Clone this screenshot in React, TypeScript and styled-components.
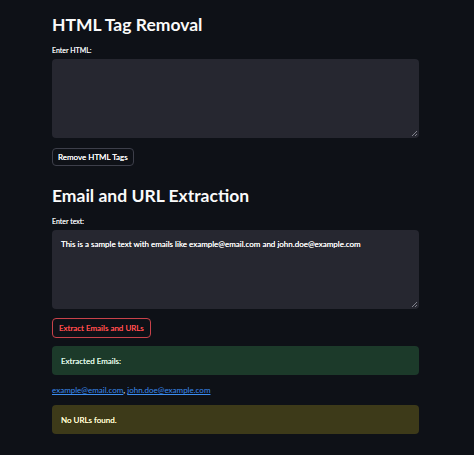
import React from 'react';
import styled, { createGlobalStyle } from 'styled-components';

const GlobalStyle = createGlobalStyle`
  html, body {
    margin: 0;
    padding: 0;
    background: #0e1117;
  }
  body {
    font-family: Lato, "Liberation Sans", sans-serif;
    color: #fafafa;
  }
`;

const Page = styled.div`
  width: 474px;
  height: 455px;
  background: #0e1117;
  overflow: hidden;
`;

const Main = styled.div`
  width: 367px;
  margin-left: 52px;
  padding-top: 12px;
  display: flex;
  flex-direction: column;
`;

const Heading = styled.h1<{ $top?: number }>`
  margin: ${(p) => p.$top ?? 0}px 0 0 0;
  font-size: 17.5px;
  font-weight: 700;
  line-height: 26px;
  color: #fafafa;
`;

const Label = styled.div`
  margin-top: 7px;
  font-size: 7px;
  font-weight: 400;
  line-height: 10px;
  color: #ececf0;
  text-shadow: 0 0 0.3px #ececf0;
`;

const TextArea = styled.div`
  position: relative;
  margin-top: 4px;
  height: 79px;
  background: #262730;
  border-radius: 4px;
  padding: 9px 9px;
  box-sizing: border-box;
  font-size: 8px;
  line-height: 11px;
  color: #fafafa;
  text-shadow: 0 0 0.3px #fafafa;
`;

const Grip = styled.svg`
  position: absolute;
  right: 1px;
  bottom: 1px;
`;

const Button = styled.button<{ $accent?: boolean }>`
  align-self: flex-start;
  margin-top: ${(p) => (p.$accent ? 9 : 10)}px;
  height: ${(p) => (p.$accent ? 20 : 18)}px;
  padding: 0 ${(p) => (p.$accent ? 6 : 5)}px;
  background: transparent;
  border: 1px solid ${(p) => (p.$accent ? '#c8424a' : '#3d3f4a')};
  border-radius: 4px;
  font-family: inherit;
  font-size: 8px;
  font-weight: 400;
  color: ${(p) => (p.$accent ? '#ff4b4b' : '#fafafa')};
  text-shadow: 0 0 0.3px currentColor;
`;

const Alert = styled.div<{ $kind: 'success' | 'warning' }>`
  margin-top: ${(p) => (p.$kind === 'success' ? 8 : 9)}px;
  height: 29px;
  border-radius: 4px;
  display: flex;
  align-items: center;
  padding: 0 9px;
  font-size: 8px;
  background: ${(p) => (p.$kind === 'success' ? '#1c3a2a' : '#3d3a19')};
  color: ${(p) => (p.$kind === 'success' ? '#dff5e3' : '#fffbd0')};
  text-shadow: 0 0 0.2px currentColor;
`;

const Links = styled.div`
  margin-top: 9px;
  font-size: 8px;
  line-height: 12px;
  color: #fafafa;
  a {
    color: #3a8cf0;
    text-decoration: underline;
  }
`;

function ResizeGrip() {
  return (
    <Grip width="8" height="8" viewBox="0 0 8 8">
      <path d="M7 2 L2 7 M7 5 L5 7" stroke="#8a8c96" strokeWidth="0.9" />
    </Grip>
  );
}

export default function App() {
  return (
    <Page>
      <GlobalStyle />
      <Main>
        <Heading>HTML Tag Removal</Heading>
        <Label>Enter HTML:</Label>
        <TextArea>
          <ResizeGrip />
        </TextArea>
        <Button>Remove HTML Tags</Button>
        <Heading $top={17}>Email and URL Extraction</Heading>
        <Label>Enter text:</Label>
        <TextArea>
          This is a sample text with emails like example@email.com and john.doe@example.com
          <ResizeGrip />
        </TextArea>
        <Button $accent>Extract Emails and URLs</Button>
        <Alert $kind="success">Extracted Emails:</Alert>
        <Links>
          <a href="#">example@email.com</a>, <a href="#">john.doe@example.com</a>
        </Links>
        <Alert $kind="warning">No URLs found.</Alert>
      </Main>
    </Page>
  );
}
